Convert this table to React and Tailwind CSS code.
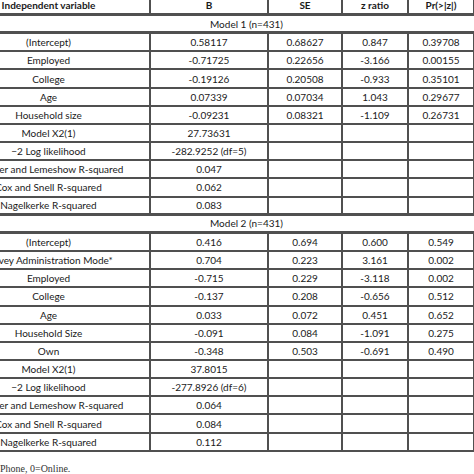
import React from "react";

const m1 = [
  ["(Intercept)", "0.58117", "0.68627", "0.847", "0.39708"],
  ["Employed", "-0.71725", "0.22656", "-3.166", "0.00155"],
  ["College", "-0.19126", "0.20508", "-0.933", "0.35101"],
  ["Age", "0.07339", "0.07034", "1.043", "0.29677"],
  ["Household size", "-0.09231", "0.08321", "-1.109", "0.26731"],
  ["Model X2(1)", "27.73631", "", "", ""],
  ["\u22122 Log likelihood", "-282.9252 (df=5)", "", "", ""],
  ["Hosmer and Lemeshow R-squared", "0.047", "", "", ""],
  ["Cox and Snell R-squared", "0.062", "", "", ""],
  ["Nagelkerke R-squared", "0.083", "", "", ""],
];

const m2 = [
  ["(Intercept)", "0.416", "0.694", "0.600", "0.549"],
  ["Survey Administration Mode*", "0.704", "0.223", "3.161", "0.002"],
  ["Employed", "-0.715", "0.229", "-3.118", "0.002"],
  ["College", "-0.137", "0.208", "-0.656", "0.512"],
  ["Age", "0.033", "0.072", "0.451", "0.652"],
  ["Household Size", "-0.091", "0.084", "-1.091", "0.275"],
  ["Own", "-0.348", "0.503", "-0.691", "0.490"],
  ["Model X2(1)", "37.8015", "", "", ""],
  ["\u22122 Log likelihood", "-277.8926 (df=6)", "", "", ""],
  ["Hosmer and Lemeshow R-squared", "0.064", "", "", ""],
  ["Cox and Snell R-squared", "0.084", "", "", ""],
  ["Nagelkerke R-squared", "0.112", "", "", ""],
];

const widths = ["w-[203px]", "w-[118px]", "w-[74px]", "w-[66px]", "w-[66px]", "w-[70px]"];

function Row({ cells, bold, thick }) {
  return (
    <div
      className={`flex h-[18.17px] ${thick ? "border-b-[3px]" : "border-b-2"} border-[#505050] ${bold ? "font-bold" : ""}`}
    >
      {[...cells, ""].map((c, i) => (
        <div
          key={i}
          className={`${widths[i]} shrink-0 flex items-center justify-center whitespace-nowrap border-r-2 border-[#505050]`}
        >
          {c}
        </div>
      ))}
    </div>
  );
}

function ModelRow({ label }) {
  return (
    <div className="flex h-[18.17px] items-center justify-center border-b-[3px] border-[#505050]">
      {label}
    </div>
  );
}

export default function App() {
  return (
    <div className="w-[474px] h-[474px] overflow-hidden bg-white text-[#1a1a1a]" style={{ fontFamily: "Lato, 'Noto Sans', sans-serif" }}>
      <div className="ml-[-52px] mt-[-2.17px] w-[597px] text-[10px] leading-none">
        <Row cells={["Independent variable", "B", "SE", "z ratio", "Pr(>|z|)"]} bold thick />
        <ModelRow label="Model 1 (n=431)" />
        {m1.map((r, i) => (
          <Row key={i} cells={r} thick={i === m1.length - 1} />
        ))}
        <ModelRow label="Model 2 (n=431)" />
        {m2.map((r, i) => (
          <Row key={i} cells={r} />
        ))}
      </div>
      <div className="mt-[11px] text-[10px] leading-[12px] text-[#333]" style={{ fontFamily: "'Liberation Serif', serif" }}>
        Phone, 0=Online.
      </div>
    </div>
  );
}
